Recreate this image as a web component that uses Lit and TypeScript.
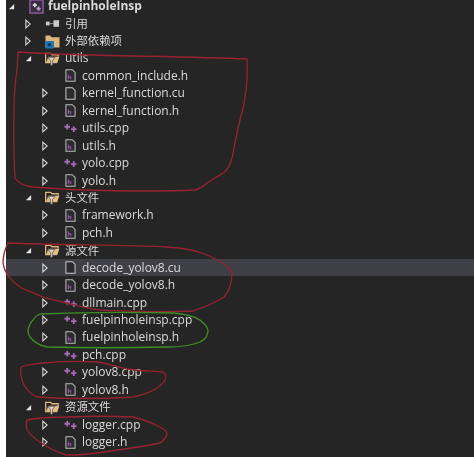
import { LitElement, html, css, svg } from "lit";
import { customElement } from "lit/decorators.js";

type Kind = "sol" | "ref" | "ext" | "folder" | "h" | "cu" | "cpp";
type Row = { label: string; level: 0 | 1 | 2; kind: Kind; arrow?: "open" | "closed"; hl?: boolean; cjk?: boolean };

const f = (label: string, kind: Kind, arrow: "closed" | undefined = "closed", hl = false): Row => ({ label, level: 2, kind, arrow, hl });
const folder = (label: string, cjk = true): Row => ({ label, level: 1, kind: "folder", arrow: "open", cjk });

const rows: Row[] = [
  { label: "fuelpinholeInsp", level: 0, kind: "sol", arrow: "open" },
  { label: "引用", level: 1, kind: "ref", arrow: "closed", cjk: true },
  { label: "外部依赖项", level: 1, kind: "ext", arrow: "closed", cjk: true },
  folder("utils", false),
  { label: "common_include.h", level: 2, kind: "h" },
  f("kernel_function.cu", "cu"),
  f("kernel_function.h", "h"),
  f("utils.cpp", "cpp"),
  f("utils.h", "h"),
  f("yolo.cpp", "cpp"),
  f("yolo.h", "h"),
  folder("头文件"),
  f("framework.h", "h"),
  f("pch.h", "h"),
  folder("源文件"),
  f("decode_yolov8.cu", "cu", "closed", true),
  f("decode_yolov8.h", "h"),
  f("dllmain.cpp", "cpp"),
  f("fuelpinholeinsp.cpp", "cpp"),
  f("fuelpinholeinsp.h", "h"),
  { label: "pch.cpp", level: 2, kind: "cpp" },
  f("yolov8.cpp", "cpp"),
  f("yolov8.h", "h"),
  folder("资源文件"),
  f("logger.cpp", "cpp"),
  f("logger.h", "h"),
];

const icons: Record<Kind, unknown> = {
  sol: svg`<svg viewBox="0 0 16 16" width="15" height="15"><rect x="1" y="1" width="14" height="14" fill="#3a2a44" stroke="#8a5f96" stroke-width="1.5"/><path d="M4 6.5h4.4M6.2 4.3v4.4" stroke="#d9d9e0" stroke-width="1.8"/><path d="M8 10.3h4.4M10.2 8.1v4.4" stroke="#b9a0c4" stroke-width="1.8"/></svg>`,
  ref: svg`<svg viewBox="0 0 16 16" width="15" height="15"><rect x="1" y="6" width="4" height="4" fill="#c8c8c8"/><rect x="5" y="7.4" width="4" height="1.2" fill="#8a8a8a"/><rect x="9" y="4.5" width="6" height="7" fill="#c8c8c8"/></svg>`,
  ext: svg`<svg viewBox="0 0 16 16" width="15" height="15"><path d="M0.5 1.5V14.5H15.5V3.5H7L5.5 1.5Z" fill="#dcb67a"/><rect x="0.5" y="7.5" width="9" height="8" fill="#1d74b8"/><rect x="3" y="10" width="3.5" height="3" fill="#0e3a5c"/></svg>`,
  folder: svg`<svg viewBox="0 0 16 16" width="15" height="15"><path d="M0.7 13V2.5H6L7.5 4H14V6" fill="none" stroke="#dcb67a" stroke-width="1.4"/><path d="M1 13L3.5 6.2H15.3L13 13Z" fill="#e3bd7f"/><path d="M3.2 6.8H10.6L8 10.2V15.2H6V10.2Z" fill="#d8d8d8" stroke="#4a4236" stroke-width="0.7"/></svg>`,
  h: svg`<svg viewBox="0 0 12 14" width="11" height="13"><path d="M1 .7H8L11 3.7V13.3H1Z" fill="#2b2b2e" stroke="#bdbdbd" stroke-width="1.1"/><path d="M3.6 6V11M3.6 8.4H6.2V11" fill="none" stroke="#9a5ea6" stroke-width="1.1"/></svg>`,
  cu: svg`<svg viewBox="0 0 12 14" width="11" height="13"><path d="M1 .7H8L11 3.7V13.3H1Z" fill="#2b2b2e" stroke="#c8c8c8" stroke-width="1.1"/></svg>`,
  cpp: svg`<svg viewBox="0 0 14 10" width="13" height="10"><path d="M.5 3.7H6.5M3.5 .7V6.7" stroke="#a968b8" stroke-width="2"/><path d="M7.5 6.2H13.5M10.5 3.2V9.2" stroke="#a968b8" stroke-width="2"/></svg>`,
};

const RED = "#98222f";
const marks = [
  { c: RED, d: "M18 52C70 56 180 56 247 59C248 78 246 100 240 120C236 135 234 150 232 158C229 170 225 172 215 178C207 182 203 188 195 190C150 192 80 191 33 187C24 186 18 183 15 178C13 150 14 120 14 105C14 85 18 70 18 52Z" },
  { c: RED, d: "M8 243C60 245 120 245 167 247C185 248 198 251 207 255C220 261 230 266 232 273C232 282 230 290 224 297C215 303 205 307 193 311C150 313 125 311 100 310C85 308 75 305 67 303C58 301 50 299 43 297C32 292 25 290 20 287C10 280 4 272 3 263C3 255 5 249 8 243Z" },
  { c: "#3d8f24", d: "M40 314C85 312 130 312 173 313C187 314 195 317 200 320C205 324 208 327 208 331C208 336 204 340 200 342C190 346 178 347 167 347C125 348 85 348 47 347C38 345 33 341 30 337C28 334 28 332 28 330C29 326 30 323 33 320C35 317 37 315 40 314Z" },
  { c: RED, d: "M21 368C22 365 35 364 43 363C60 361 80 361 97 362C107 363 117 367 127 369C140 371 152 371 163 372C166 374 166 377 165 380C163 384 160 386 157 388C150 393 142 395 133 397C100 399 68 399 37 397C30 394 26 389 23 383C21 377 20 372 21 368Z" },
  { c: RED, d: "M27 420C40 417 53 417 67 417C90 416 112 416 133 417C142 419 152 423 160 427C164 429 167 431 167 434C166 438 163 441 160 443C147 446 132 448 117 450C100 453 83 455 67 455C55 452 45 446 37 440C32 436 29 433 27 430C26 426 26 423 27 420Z" },
];

@customElement("app-root")
export class AppRoot extends LitElement {
  static styles = css`
    :host {
      display: block;
      position: relative;
      width: 474px;
      height: 457px;
      overflow: hidden;
      background: #fff;
      font-family: "Open Sans", "Noto Sans CJK SC", sans-serif;
    }
    .panel {
      position: absolute;
      inset: 0 0 0 6px;
      background: #252526;
      overflow: hidden;
      filter: blur(0.4px);
    }
    .tree {
      display: flex;
      flex-direction: column;
      margin-top: -2.6px;
    }
    .row {
      display: grid;
      align-items: center;
      height: 17.44px;
      color: #dadada;
      font-size: 12px;
      white-space: nowrap;
    }
    .row.l0 { grid-template-columns: 10px 32px auto; }
    .row.l0 .icon { padding-left: 8px; }
    .row.l1 { grid-template-columns: 24px 25px auto; padding-left: 10px; }
    .row.l2 { grid-template-columns: 28px 23px auto; padding-left: 25px; }
    .row.hl { background: #3f3f46; }
    .label { line-height: 1; }
    .l0 .label { font-weight: 700; }
    .label.cjk { font-size: 11.4px; }
    .arrow, .icon { display: flex; align-items: center; justify-content: center; }
    .arrow svg, .icon svg { display: block; }
    .overlay {
      position: absolute;
      left: 0;
      top: 0;
      pointer-events: none;
    }
  `;

  private arrow(a?: "open" | "closed") {
    if (a === "open")
      return svg`<svg viewBox="0 0 8 8" width="7" height="7"><path d="M7 1V7H1Z" fill="#e2e2e2"/></svg>`;
    if (a === "closed")
      return svg`<svg viewBox="0 0 7 11" width="6" height="10"><path d="M1 1L6 5.5L1 10Z" fill="none" stroke="#d8d8d8" stroke-width="1.3"/></svg>`;
    return "";
  }

  render() {
    return html`
      <div class="panel">
        <div class="tree">
          ${rows.map(
            (r) => html`<div class="row l${r.level} ${r.hl ? "hl" : ""}">
              <span class="arrow">${this.arrow(r.arrow)}</span>
              <span class="icon">${icons[r.kind]}</span>
              <span class="label ${r.cjk ? "cjk" : ""}">${r.label}</span>
            </div>`
          )}
        </div>
      </div>
      <svg class="overlay" width="474" height="457" viewBox="0 0 474 457">
        ${marks.map((m) => svg`<path d=${m.d} fill="none" stroke=${m.c} stroke-width="1.3"/>`)}
      </svg>
    `;
  }
}
